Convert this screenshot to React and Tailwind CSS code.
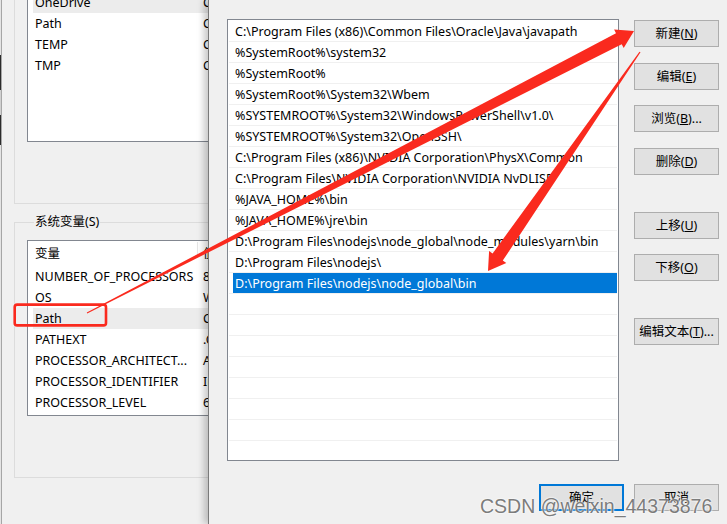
import React from "react";

const userVars = [
  ["OneDrive", "C:\\Users\\weixin\\OneDrive", true],
  ["Path", "C:\\Users\\weixin\\AppData\\Local\\Microsoft\\WindowsApps", false],
  ["TEMP", "C:\\Users\\weixin\\AppData\\Local\\Temp", false],
  ["TMP", "C:\\Users\\weixin\\AppData\\Local\\Temp", false],
];

const sysVars = [
  ["NUMBER_OF_PROCESSORS", "8", false],
  ["OS", "Windows_NT", false],
  ["Path", "C:\\Program Files (x86)\\Common Files\\Oracle\\Java\\javapath", true],
  ["PATHEXT", ".COM;.EXE;.BAT;.CMD;.VBS;.VBE;.JS", false],
  ["PROCESSOR_ARCHITECT...", "AMD64", false],
  ["PROCESSOR_IDENTIFIER", "Intel64 Family 6 Model 142", false],
  ["PROCESSOR_LEVEL", "6", false],
];

const paths = [
  "C:\\Program Files (x86)\\Common Files\\Oracle\\Java\\javapath",
  "%SystemRoot%\\system32",
  "%SystemRoot%",
  "%SystemRoot%\\System32\\Wbem",
  "%SYSTEMROOT%\\System32\\WindowsPowerShell\\v1.0\\",
  "%SYSTEMROOT%\\System32\\OpenSSH\\",
  "C:\\Program Files (x86)\\NVIDIA Corporation\\PhysX\\Common",
  "C:\\Program Files\\NVIDIA Corporation\\NVIDIA NvDLISR",
  "%JAVA_HOME%\\bin",
  "%JAVA_HOME%\\jre\\bin",
  "D:\\Program Files\\nodejs\\node_global\\node_modules\\yarn\\bin",
  "D:\\Program Files\\nodejs\\",
  "D:\\Program Files\\nodejs\\node_global\\bin",
];

function arrowPoints(tx, ty, px, py, headLen, headHalf, shaftHalf, tailHalf) {
  const dx = px - tx;
  const dy = py - ty;
  const L = Math.hypot(dx, dy);
  const ux = dx / L;
  const uy = dy / L;
  const nx = -uy;
  const ny = ux;
  const bx = px - ux * headLen;
  const by = py - uy * headLen;
  const pts = [
    [tx + nx * tailHalf, ty + ny * tailHalf],
    [bx + nx * shaftHalf, by + ny * shaftHalf],
    [bx + nx * headHalf, by + ny * headHalf],
    [px, py],
    [bx - nx * headHalf, by - ny * headHalf],
    [bx - nx * shaftHalf, by - ny * shaftHalf],
    [tx - nx * tailHalf, ty - ny * tailHalf],
  ];
  return pts.map((p) => p.map((v) => v.toFixed(1)).join(",")).join(" ");
}

function VarRow({ name, value, hl }) {
  return (
    <div className={`flex h-[21px] items-center pt-[2px] ml-[5px] ${hl ? "bg-[#ececec]" : ""}`}>
      <div className="w-[170px] shrink-0 pl-[2px] whitespace-nowrap overflow-hidden">{name}</div>
      <div className="whitespace-nowrap">{value}</div>
    </div>
  );
}

function Btn({ children, primary, className = "" }) {
  return (
    <div
      className={`flex h-[27px] w-[85px] shrink-0 items-center justify-center pt-[2px] bg-[#e1e1e1] ${
        primary ? "border-2 border-[#0078d7]" : "border border-[#adadad]"
      } ${className}`}
    >
      <span className="whitespace-nowrap">{children}</span>
    </div>
  );
}

function BackDialog() {
  return (
    <div className="flex h-full w-[208px] shrink-0 overflow-hidden bg-[#f0f0f0]">
      <div className="flex w-[1px] shrink-0 flex-col">
        <div className="h-[55px] bg-[#e4e4e4]" />
        <div className="h-[35px] bg-[#2c2c2c]" />
        <div className="h-[25px] bg-[#d0d0d0]" />
        <div className="h-[30px] bg-[#2c2c2c]" />
        <div className="flex-1 bg-[#e4e4e4]" />
      </div>
      <div className="w-[1px] shrink-0 bg-[#a6a6a6]" />
      <div className="flex w-[420px] shrink-0 flex-col pl-[12px]">
        <div className="-mt-[10px] border-b border-l border-[#dcdcdc] pb-[61px] pl-[12px]">
          <div className="h-[152px] border border-[#828790] bg-white pt-[1px]">
            {userVars.map(([n, v, h]) => (
              <VarRow key={n} name={n} value={v} hl={h} />
            ))}
          </div>
        </div>
        <fieldset className="mt-[10px] border border-[#dcdcdc] pb-[61px] pl-[12px]">
          <legend className="ml-[7px] px-[1px] leading-[16px]">系统变量(S)</legend>
          <div className="mt-[10px] h-[176px] border border-[#828790] bg-white">
            <div className="ml-[5px] flex h-[25px] items-center pt-[2px]">
              <div className="w-[164px] shrink-0 pl-[2px] whitespace-nowrap">变量</div>
              <div className="h-[16px] w-[1px] self-start mt-[-1px] bg-[#e5e5e5]" />
              <div className="ml-[5px] whitespace-nowrap">值</div>
            </div>
            {sysVars.map(([n, v, h]) => (
              <VarRow key={n} name={n} value={v} hl={h} />
            ))}
          </div>
        </fieldset>
      </div>
    </div>
  );
}

function FrontDialog() {
  const rows = [];
  for (let i = 0; i < 21; i++) rows.push(paths[i] || "");
  return (
    <div className="relative z-10 flex h-full w-[519px] shrink-0 flex-col border-l border-[#7a7a7a] bg-[#f0f0f0] pl-[18px] pr-[8px] pt-[19px] shadow-[-4px_0_7px_rgba(0,0,0,0.22)]">
      <div className="flex">
        <div className="h-[442px] w-[392px] shrink-0 overflow-hidden border border-[#828790] bg-white pt-[1px]">
          {rows.map((t, i) => (
            <div key={i} className="mx-[1px] h-[21px] border-b border-[#f0f0f0]">
              <div
                className={`ml-[4px] flex h-full items-center whitespace-nowrap pl-[2px] pt-[3px] ${
                  i === 12 ? "bg-[#0078d7] text-white" : ""
                }`}
              >
                {t}
              </div>
            </div>
          ))}
        </div>
        <div className="ml-[15px] flex w-[85px] flex-col">
          <Btn className="mt-[1px]">新建(<u>N</u>)</Btn>
          <Btn className="mt-[16px]">编辑(<u>E</u>)</Btn>
          <Btn className="mt-[15px]">浏览(<u>B</u>)...</Btn>
          <Btn className="mt-[16px]">删除(<u>D</u>)</Btn>
          <Btn className="mt-[37px]">上移(<u>U</u>)</Btn>
          <Btn className="mt-[15px]">下移(<u>O</u>)</Btn>
          <Btn className="mt-[37px]">编辑文本(<u>T</u>)...</Btn>
        </div>
      </div>
      <div className="mt-[23px] flex justify-end gap-[10px]">
        <Btn primary>确定</Btn>
        <Btn>取消</Btn>
      </div>
    </div>
  );
}

export default function App() {
  const a1 = arrowPoints(87, 313, 634, 31, 17, 10.5, 6.2, 0.5);
  const a2 = arrowPoints(640, 52, 488, 271, 17, 10.5, 6.2, 0.6);
  return (
    <div className="relative flex h-[524px] w-[727px] overflow-hidden bg-[#f0f0f0] font-['Noto_Sans','Noto_Sans_CJK_SC',sans-serif] text-[12.5px] text-black">
      <BackDialog />
      <FrontDialog />
      <svg
        className="pointer-events-none absolute left-0 top-0 z-20"
        width="727"
        height="524"
        viewBox="0 0 727 524"
      >
        <rect x="14.7" y="304.6" width="91.3" height="20.8" rx="2.5" fill="none" stroke="#fa2a1e" strokeWidth="2.6" />
        <polygon points={a1} fill="#fa2a1e" />
        <polygon points={a2} fill="#fa2a1e" />
      </svg>
      <div className="pointer-events-none absolute left-[480px] top-[494px] z-30 whitespace-nowrap font-['Liberation_Sans',Arial,sans-serif] text-[19.5px] leading-[24px] text-[#7c7c7c] [text-shadow:0_0_2px_#fff,0_0_2px_#fff]">
        CSDN @weixin_44373876
      </div>
    </div>
  );
}
